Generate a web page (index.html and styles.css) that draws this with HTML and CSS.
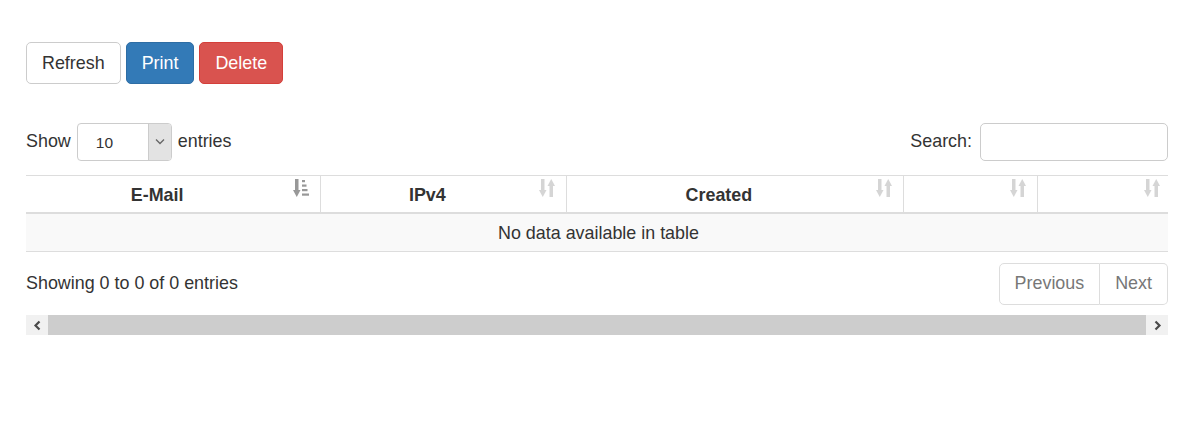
FILE: index.html
```html
<!DOCTYPE html>
<html>
<head>
<meta charset="utf-8">
<link rel="stylesheet" href="styles.css">
</head>
<body>
<div class="page">
  <div class="toolbar">
    <button class="btn btn-default">Refresh</button>
    <button class="btn btn-primary">Print</button>
    <button class="btn btn-danger">Delete</button>
  </div>

  <div class="controls">
    <div class="length">
      <span>Show</span>
      <span class="select">
        <span class="select-val">10</span>
        <span class="select-arrow">
          <svg width="10" height="7" viewBox="0 0 10 7"><path d="M1 1.5 L5 5.5 L9 1.5" fill="none" stroke="#666" stroke-width="1.3"/></svg>
        </span>
      </span>
      <span>entries</span>
    </div>
    <div class="search">
      <span>Search:</span>
      <input class="search-input" type="text">
    </div>
  </div>

  <div class="table-wrap">
    <table class="dt">
      <colgroup>
        <col class="c1"><col class="c2"><col class="c3"><col class="c4"><col class="c5">
      </colgroup>
      <thead>
        <tr>
          <th><span class="th-label">E-Mail</span>
            <svg class="sort sort-active" width="16" height="18" viewBox="0 0 16 18">
              <rect x="2" y="0" width="3.5" height="12"/>
              <path d="M0 11 L7.5 11 L3.75 18 Z"/>
              <rect x="9" y="1" width="3" height="2.2"/>
              <rect x="9" y="5.5" width="4.5" height="2.2"/>
              <rect x="9" y="10" width="5.5" height="2.2"/>
              <rect x="9" y="14.5" width="7" height="2.2"/>
            </svg>
          </th>
          <th><span class="th-label">IPv4</span>
            <svg class="sort" width="16" height="18" viewBox="0 0 16 18">
              <rect x="2" y="0" width="3.5" height="12"/>
              <path d="M0 11 L7.5 11 L3.75 18 Z"/>
              <path d="M8.5 7 L16 7 L12.25 0 Z"/>
              <rect x="10.5" y="6" width="3.5" height="12"/>
            </svg>
          </th>
          <th><span class="th-label">Created</span>
            <svg class="sort" width="16" height="18" viewBox="0 0 16 18">
              <rect x="2" y="0" width="3.5" height="12"/>
              <path d="M0 11 L7.5 11 L3.75 18 Z"/>
              <path d="M8.5 7 L16 7 L12.25 0 Z"/>
              <rect x="10.5" y="6" width="3.5" height="12"/>
            </svg>
          </th>
          <th><span class="th-label"></span>
            <svg class="sort" width="16" height="18" viewBox="0 0 16 18">
              <rect x="2" y="0" width="3.5" height="12"/>
              <path d="M0 11 L7.5 11 L3.75 18 Z"/>
              <path d="M8.5 7 L16 7 L12.25 0 Z"/>
              <rect x="10.5" y="6" width="3.5" height="12"/>
            </svg>
          </th>
          <th><span class="th-label"></span>
            <svg class="sort" width="16" height="18" viewBox="0 0 16 18">
              <rect x="2" y="0" width="3.5" height="12"/>
              <path d="M0 11 L7.5 11 L3.75 18 Z"/>
              <path d="M8.5 7 L16 7 L12.25 0 Z"/>
              <rect x="10.5" y="6" width="3.5" height="12"/>
            </svg>
          </th>
        </tr>
      </thead>
      <tbody>
        <tr><td colspan="5" class="empty">No data available in table</td></tr>
      </tbody>
    </table>
  </div>

  <div class="info-row">
    <div class="info">Showing 0 to 0 of 0 entries</div>
    <div class="pagination">
      <span class="page-link first">Previous</span>
      <span class="page-link last">Next</span>
    </div>
  </div>

  <div class="hscroll">
    <span class="sb-btn">
      <svg width="9" height="11" viewBox="0 0 9 11"><path d="M6.5 1.5 L2.5 5.5 L6.5 9.5" fill="none" stroke="#4a4a4a" stroke-width="2.2"/></svg>
    </span>
    <span class="sb-thumb"></span>
    <span class="sb-btn">
      <svg width="9" height="11" viewBox="0 0 9 11"><path d="M2.5 1.5 L6.5 5.5 L2.5 9.5" fill="none" stroke="#4a4a4a" stroke-width="2.2"/></svg>
    </span>
  </div>
</div>
</body>
</html>
```

FILE: styles.css
```css
* { box-sizing: border-box; }

body {
  margin: 0;
  background: #fff;
  font-family: "Liberation Sans", Arial, Helvetica, sans-serif;
  font-size: 17.9px;
  line-height: 25px;
  color: #333;
}

.page {
  padding: 42px 32px 0 26px;
}

.toolbar {
  display: flex;
  gap: 5px;
}

.btn {
  font-family: inherit;
  font-size: 17.9px;
  line-height: 25px;
  padding: 7.5px 15px;
  border: 1px solid #ccc;
  border-radius: 5px;
  background: #fff;
  color: #333;
  cursor: pointer;
}

.btn-primary {
  background: #337ab7;
  border-color: #2e6da4;
  color: #fff;
}

.btn-danger {
  background: #d9534f;
  border-color: #d43f3a;
  color: #fff;
}

.controls {
  margin-top: 38.5px;
  display: flex;
  justify-content: space-between;
  align-items: center;
  height: 38px;
}

.length {
  display: flex;
  align-items: center;
  gap: 6px;
}

.select {
  display: flex;
  width: 95px;
  height: 38px;
  border: 1px solid #ccc;
  border-radius: 4px;
  overflow: hidden;
  font-size: 15.5px;
}

.select-val {
  flex: 1;
  display: flex;
  align-items: center;
  padding-left: 18px;
  padding-top: 2px;
  color: #333;
}

.select-arrow {
  width: 23px;
  background: #e3e3e3;
  border-left: 1px solid #ccc;
  display: flex;
  align-items: center;
  justify-content: center;
}

.search {
  display: flex;
  align-items: center;
  gap: 8px;
}

.search-input {
  width: 188px;
  height: 38px;
  border: 1px solid #ccc;
  border-radius: 5px;
  outline: none;
  font-family: inherit;
  font-size: 17.9px;
}

.table-wrap {
  margin-top: 14px;
  width: 1142px;
  overflow: hidden;
}

.dt {
  width: 1145px;
  table-layout: fixed;
  border-collapse: collapse;
  border-top: 1px solid #ddd;
  border-bottom: 1px solid #ddd;
}

.c1 { width: 294px; }
.c2 { width: 246px; }
.c3 { width: 337px; }
.c4 { width: 134px; }
.c5 { width: 134px; }

.dt th {
  position: relative;
  text-align: center;
  font-weight: bold;
  padding: 7px 37.5px 4px 6.25px;
  border-left: 1px solid #ddd;
  border-bottom: 2.5px solid #ddd;
  height: 37px;
}

.dt th:first-child { border-left: none; }

.th-label {
  display: block;
  min-height: 25px;
}

.sort {
  position: absolute;
  top: 3px;
  right: 11px;
  fill: #333;
  opacity: 0.2;
}

.sort-active { opacity: 0.5; }

.dt td.empty {
  background: #f9f9f9;
  text-align: center;
  padding: 7px 6.25px 5px;
  height: 37px;
}

.info-row {
  margin-top: 11px;
  display: flex;
  justify-content: space-between;
  align-items: center;
}

.pagination {
  display: flex;
}

.page-link {
  padding: 7.5px 15px;
  border: 1px solid #ddd;
  color: #777;
  background: #fff;
  line-height: 25px;
}

.page-link.first {
  border-radius: 5px 0 0 5px;
}

.page-link.last {
  border-left: none;
  border-radius: 0 5px 5px 0;
}

.hscroll {
  margin-top: 10.5px;
  height: 20px;
  display: flex;
  background: #f1f1f1;
}

.sb-btn {
  width: 22px;
  display: flex;
  align-items: center;
  justify-content: center;
}

.sb-thumb {
  flex: 1;
  background: #cdcdcd;
}
```
